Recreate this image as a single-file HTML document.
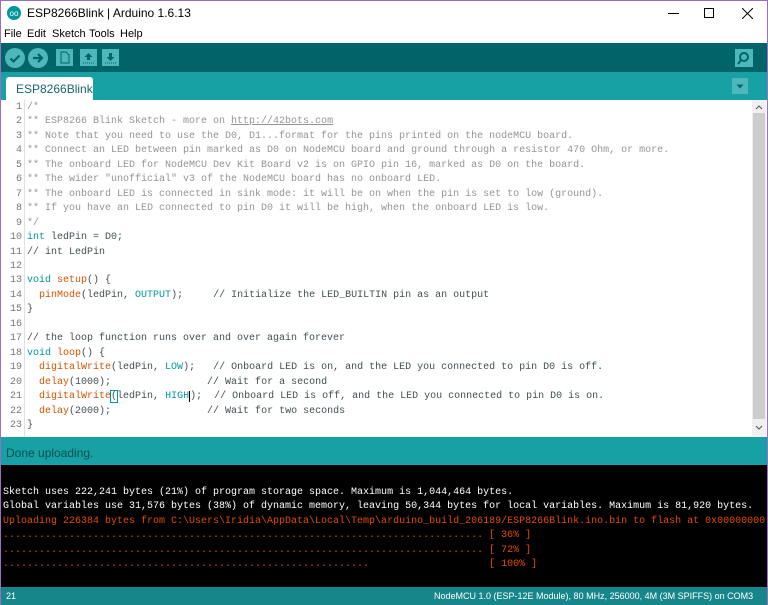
<!DOCTYPE html>
<html><head><meta charset="utf-8"><style>
*{margin:0;padding:0;box-sizing:border-box}
body{width:768px;height:605px;overflow:hidden;background:#fff;font-family:"Liberation Sans",sans-serif;position:relative}
.abs{position:absolute}
#title{left:0;top:0;width:768px;height:24px;background:#fff;border-top:1px solid #9b6fc0}
#title .t{left:27px;top:5px;font-size:12px;color:#000}
#menu{left:0;top:24px;width:768px;height:19px;background:#fff;font-size:11px}
#menu span{position:absolute;top:4px}
#tool{left:0;top:43px;width:768px;height:29px;background:#006468}
.circ{width:20px;height:20px;border-radius:50%;background:#4db7bb;top:48px}
.sq{width:17px;height:17px;background:#4db7bb;top:49px}
#tabs{left:0;top:72px;width:768px;height:28px;background:#17a1a5}
#tab{left:6px;top:77px;width:87px;height:23px;background:#fff;border-radius:3px 3px 0 0;font-size:12px;color:#17656a;padding:5px 0 0 10px}
#ed{left:0;top:100px;width:768px;height:337px;background:#fff}
pre{font-family:"Liberation Mono",monospace;font-size:10px;line-height:14.45px;white-space:pre}
#gut{left:0;top:101px;width:22px;text-align:right;color:#777}
#sep{left:24px;top:100px;width:1px;height:337px;background:#e0e0e0}
#code{left:27px;top:101px;color:#434f54}
.c{color:#959595}.k{color:#00979c}.f{color:#d35400}
#sb{left:752px;top:100px;width:14px;height:337px;background:#f0f0f0}
#thumb{left:753px;top:113px;width:12px;height:306px;background:#cdcdcd}
#status{left:0;top:437px;width:768px;height:28px;background:#17a1a5;font-size:12px;color:#0d4f52;padding:9px 0 0 6px}
#con{left:0;top:465px;width:768px;height:122px;background:#000}
#ctext{left:3px;top:486px;color:#fff;line-height:14.4px}
.o{color:#e34c00}
#bot{left:0;top:587px;width:768px;height:18px;background:#17868a;color:#fff;font-size:9px}
#lb{left:0;top:0;width:1px;height:605px;background:#9b6fc0}
#rb{left:767px;top:0;width:1px;height:605px;background:#9b6fc0}
</style></head><body>
<div id="title" class="abs">
<svg class="abs" style="left:7px;top:5px" width="14" height="14" viewBox="0 0 14 14"><circle cx="7" cy="7" r="7" fill="#00979c"/><text x="7" y="10" font-size="8" fill="#fff" text-anchor="middle" font-family="Liberation Sans">oo</text></svg>
<div class="t abs">ESP8266Blink | Arduino 1.6.13</div>
<div class="abs" style="left:668px;top:12px;width:11px;height:1px;background:#000"></div>
<div class="abs" style="left:704px;top:7px;width:10px;height:10px;border:1px solid #000"></div>
<svg class="abs" style="left:742px;top:7px" width="11" height="11"><path d="M0 0L11 11M11 0L0 11" stroke="#000" stroke-width="1"/></svg>
</div>
<div id="menu" class="abs"><span style="left:4px">File</span><span style="left:27px">Edit</span><span style="left:52px">Sketch</span><span style="left:89px">Tools</span><span style="left:120px">Help</span></div>
<div id="tool" class="abs"></div>
<div class="abs circ" style="left:5px"></div>
<svg class="abs" style="left:5px;top:48px" width="20" height="20"><path d="M5.5 10.5l3 3 6-6" stroke="#006468" stroke-width="2.2" fill="none"/></svg>
<div class="abs circ" style="left:28px"></div>
<svg class="abs" style="left:28px;top:48px" width="20" height="20"><path d="M5 10h8M10 6l4 4-4 4" stroke="#006468" stroke-width="2.2" fill="none"/></svg>
<div class="abs sq" style="left:56px"></div>
<svg class="abs" style="left:56px;top:49px" width="17" height="17"><path d="M5 3h5l3 3v8H5z" stroke="#006468" stroke-width="1" fill="none"/></svg>
<div class="abs sq" style="left:80px"></div>
<svg class="abs" style="left:80px;top:49px" width="17" height="17"><path d="M8.5 4l4 4h-2.5v3h-3v-3H4.5z" fill="#006468"/><path d="M3 14h11" stroke="#006468" stroke-dasharray="1 1"/></svg>
<div class="abs sq" style="left:102px"></div>
<svg class="abs" style="left:102px;top:49px" width="17" height="17"><path d="M8.5 12l4-4h-2.5v-4h-3v4H4.5z" fill="#006468"/><path d="M3 14h11" stroke="#006468" stroke-dasharray="1 1"/></svg>
<div class="abs" style="left:735px;top:49px;width:18px;height:18px;background:#4db7bb"></div>
<svg class="abs" style="left:735px;top:49px" width="18" height="18"><circle cx="9" cy="8" r="4" stroke="#006468" stroke-width="2" fill="none"/><path d="M6 11l-3 4" stroke="#006468" stroke-width="2"/></svg>
<div id="tabs" class="abs"></div>
<div id="tab" class="abs">ESP8266Blink</div>
<div class="abs" style="left:732px;top:78px;width:16px;height:16px;background:#4db7bb"></div>
<svg class="abs" style="left:732px;top:78px" width="16" height="16"><path d="M4.5 6.5h7l-3.5 4z" fill="#006468"/></svg>
<div id="ed" class="abs"></div>
<div id="sep" class="abs"></div>
<pre id="gut" class="abs">1
2
3
4
5
6
7
8
9
10
11
12
13
14
15
16
17
18
19
20
21
22
23</pre>
<pre id="code" class="abs"><span class="c">/*
** ESP8266 Blink Sketch - more on <u>http://42bots.com</u>
** Note that you need to use the D0, D1...format for the pins printed on the nodeMCU board.
** Connect an LED between pin marked as D0 on NodeMCU board and ground through a resistor 470 Ohm, or more.
** The onboard LED for NodeMCU Dev Kit Board v2 is on GPIO pin 16, marked as D0 on the board.
** The wider "unofficial" v3 of the NodeMCU board has no onboard LED.
** The onboard LED is connected in sink mode: it will be on when the pin is set to low (ground).
** If you have an LED connected to pin D0 it will be high, when the onboard LED is low.
*/</span>
<span class="k">int</span> ledPin = D0;
// int LedPin

<span class="k">void</span> <span class="f">setup</span>() {
  <span class="f">pinMode</span>(ledPin, <span class="k">OUTPUT</span>);     // Initialize the LED_BUILTIN pin as an output
}

// the loop function runs over and over again forever
<span class="k">void</span> <span class="f">loop</span>() {
  <span class="f">digitalWrite</span>(ledPin, <span class="k">LOW</span>);   // Onboard LED is on, and the LED you connected to pin D0 is off.
  <span class="f">delay</span>(1000);                // Wait for a second
  <span class="f">digitalWrite</span><span style="outline:1px solid #00979c">(</span>ledPin, <span class="k">HIGH</span><span style="border-left:1px solid #000">)</span>;  // Onboard LED is off, and the LED you connected to pin D0 is on.
  <span class="f">delay</span>(2000);                // Wait for two seconds
}</pre>
<div id="sb" class="abs"></div>
<div id="thumb" class="abs"></div>
<svg class="abs" style="left:754px;top:103px" width="10" height="8"><path d="M2 6l3-3 3 3" stroke="#555" fill="none"/></svg>
<svg class="abs" style="left:754px;top:424px" width="10" height="8"><path d="M2 2l3 3 3-3" stroke="#555" fill="none"/></svg>
<div id="status" class="abs">Done uploading.</div>
<div id="con" class="abs"></div>
<pre id="ctext" class="abs">Sketch uses 222,241 bytes (21%) of program storage space. Maximum is 1,044,464 bytes.
Global variables use 31,576 bytes (38%) of dynamic memory, leaving 50,344 bytes for local variables. Maximum is 81,920 bytes.
<span class="o">Uploading 226384 bytes from C:\Users\Iridia\AppData\Local\Temp\arduino_build_206189/ESP8266Blink.ino.bin to flash at 0x00000000
................................................................................ [ 36% ]
................................................................................ [ 72% ]
.............................................................                    [ 100% ]</span></pre>
<div id="bot" class="abs"><span class="abs" style="left:6px;top:4px">21</span><span class="abs" style="left:434px;top:4px">NodeMCU 1.0 (ESP-12E Module), 80 MHz, 256000, 4M (3M SPIFFS) on COM3</span></div>
<div id="lb" class="abs"></div><div id="rb" class="abs"></div>
</body></html>
